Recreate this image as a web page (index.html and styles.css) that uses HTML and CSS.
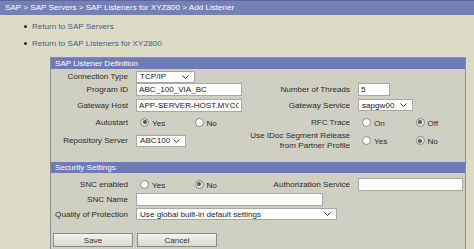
FILE: index.html
```html
<!DOCTYPE html>
<html>
<head>
<meta charset="utf-8">
<link rel="stylesheet" href="styles.css">
</head>
<body>
<div class="topbar">SAP &gt; SAP Servers &gt; SAP Listeners for XYZ800 &gt; Add Listener</div>
<ul class="links">
  <li><a href="#">Return to SAP Servers</a></li>
  <li><a href="#">Return to SAP Listeners for XYZ800</a></li>
</ul>
<div class="panel">
  <div class="phead">SAP Listener Definition</div>
  <div class="grid def">
    <div class="lbl">Connection Type</div>
    <div class="val"><div class="select w59"><span>TCP/IP</span><svg class="chev" viewBox="0 0 7 4"><polyline points="0.5,0.5 3.5,3.5 6.5,0.5"/></svg></div></div>
    <div></div><div></div>

    <div class="lbl">Program ID</div>
    <div class="val"><input class="input w106" type="text" value="ABC_100_VIA_BC"></div>
    <div class="lbl">Number of Threads</div>
    <div class="val"><input class="input w32" type="text" value="5"></div>

    <div class="lbl">Gateway Host</div>
    <div class="val"><input class="input w106" type="text" value="APP-SERVER-HOST.MYCOMPANY.COM"></div>
    <div class="lbl">Gateway Service</div>
    <div class="val"><div class="select w55"><span>sapgw00</span><svg class="chev" viewBox="0 0 7 4"><polyline points="0.5,0.5 3.5,3.5 6.5,0.5"/></svg></div></div>

    <div class="lbl">Autostart</div>
    <div class="val radios"><span class="opt"><span class="radio on"></span>Yes</span><span class="opt"><span class="radio"></span>No</span></div>
    <div class="lbl">RFC Trace</div>
    <div class="val radios"><span class="opt"><span class="radio"></span>On</span><span class="opt"><span class="radio on"></span>Off</span></div>

    <div class="lbl">Repository Server</div>
    <div class="val"><div class="select w50"><span>ABC100</span><svg class="chev" viewBox="0 0 7 4"><polyline points="0.5,0.5 3.5,3.5 6.5,0.5"/></svg></div></div>
    <div class="lbl two">Use IDoc Segment Release<br>from Partner Profile</div>
    <div class="val radios"><span class="opt"><span class="radio"></span>Yes</span><span class="opt"><span class="radio on"></span>No</span></div>
  </div>
  <div class="phead">Security Settings</div>
  <div class="grid sec">
    <div class="lbl">SNC enabled</div>
    <div class="val radios"><span class="opt"><span class="radio"></span>Yes</span><span class="opt"><span class="radio on"></span>No</span></div>
    <div class="lbl">Authorization Service</div>
    <div class="val"><input class="input w105" type="text" value=""></div>

    <div class="lbl">SNC Name</div>
    <div class="val span3"><input class="input w187" type="text" value=""></div>

    <div class="lbl">Quality of Protection</div>
    <div class="val span3"><div class="select w201"><span>Use global built-in default settings</span><svg class="chev" viewBox="0 0 7 4"><polyline points="0.5,0.5 3.5,3.5 6.5,0.5"/></svg></div></div>
  </div>
  <div class="buttons">
    <button class="btn" type="button">Save</button>
    <button class="btn" type="button">Cancel</button>
  </div>
</div>
</body>
</html>
```
FILE: styles.css
```css
html, body {
  margin: 0;
  background: #dcdbc5;
}
body {
  font-family: "Liberation Sans", Arial, sans-serif;
  font-size: 8.1px;
  color: #2b2b2b;
  overflow: hidden;
}
.topbar {
  height: 14px;
  line-height: 14px;
  border-top: 1px solid #5f6a9c;
  background: #7480ba;
  color: #fff;
  padding-left: 5px;
  white-space: nowrap;
}
.links {
  list-style: none;
  margin: 0;
  padding: 3px 0 0 24px;
}
.links li {
  display: flex;
  align-items: center;
  height: 17px;
}
.links li::before {
  content: "";
  width: 3px;
  height: 3px;
  border-radius: 50%;
  background: #222;
  margin-right: 5px;
}
.links a {
  color: #485b8d;
  text-decoration: none;
}
.panel {
  margin: 5px 0 0 50px;
  width: 414px;
  border: 1px solid #8e8e8a;
  background: #cfcfc2;
  padding-bottom: 4px;
}
.phead {
  background: #6e7bb6;
  color: #fff;
  height: 11px;
  line-height: 11px;
  padding-left: 4px;
}
.grid {
  display: grid;
  grid-template-columns: 82px 112px 110px 110px;
  align-items: center;
}
.def {
  padding: 1px 0 11px;
  grid-template-rows: 13px 13px 18px 16px 21px;
}
.sec {
  padding: 4px 0 0;
  grid-template-rows: 14px 16px 14px;
}
.lbl {
  text-align: right;
  padding-right: 5px;
  white-space: nowrap;
}
.lbl.two {
  line-height: 10px;
}
.val {
  padding-left: 3px;
  display: flex;
  align-items: center;
}
.span3 {
  grid-column: span 3;
}
.input {
  box-sizing: border-box;
  height: 13px;
  margin: 0;
  border: 1px solid #a9a9a4;
  border-radius: 0;
  background: #fff;
  padding: 0 2px;
  font: inherit;
  color: #222;
  outline: none;
}
.select {
  box-sizing: border-box;
  height: 12px;
  border: 1px solid #a9a9a4;
  background: #fff;
  padding: 0 5px 0 3px;
  color: #222;
  display: flex;
  align-items: center;
  justify-content: space-between;
  white-space: nowrap;
}
.chev {
  width: 7px;
  height: 4px;
  fill: none;
  stroke: #333;
  stroke-width: 1;
}
.w32 { width: 32px; }
.w50 { width: 50px; }
.w55 { width: 55px; }
.w59 { width: 59px; }
.w105 { width: 105px; }
.w106 { width: 106px; }
.w187 { width: 187px; }
.w201 { width: 201px; }
.radios .opt {
  display: flex;
  align-items: center;
  width: 59px;
  padding-top: 2px;
}
.radio {
  box-sizing: border-box;
  width: 9px;
  height: 9px;
  border-radius: 50%;
  border: 1px solid #8a8a86;
  background: #fff;
  margin: -2px 3px 0 4px;
  display: flex;
  align-items: center;
  justify-content: center;
}
.radio.on {
  background: #e2e2dc;
}
.radio.on::after {
  content: "";
  width: 4px;
  height: 4px;
  border-radius: 50%;
  background: #555;
}
.buttons {
  display: flex;
  gap: 4px;
  padding: 12px 0 0 2px;
}
.btn {
  width: 80px;
  height: 14px;
  padding: 0;
  border: 1px solid #8c8c86;
  background: linear-gradient(#f4f4f0, #d8d8d0);
  font: inherit;
  color: #333;
}
```
